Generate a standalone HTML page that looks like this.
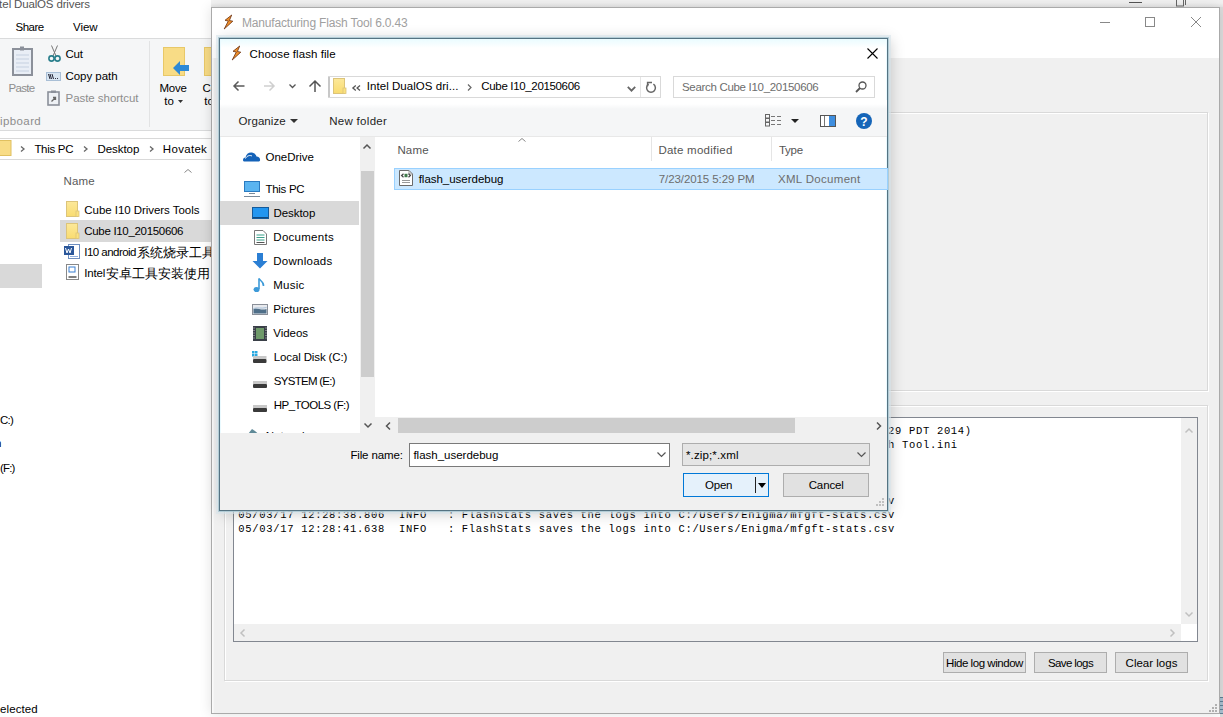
<!DOCTYPE html>
<html><head><meta charset="utf-8"><style>
html,body{margin:0;padding:0;}
body{width:1223px;height:717px;overflow:hidden;position:relative;background:#fff;font-family:'Liberation Sans', sans-serif;}
.b{position:absolute;box-sizing:border-box;}
.t{position:absolute;white-space:pre;}
svg{position:absolute;overflow:visible;}
</style></head><body>
<div class="b" style="left:0px;top:0px;width:1223px;height:717px;background:#ffffff;"></div>
<div class="t" style="left:-10.5px;top:-0.7px;font-size:11.5px;line-height:11.5px;color:#555;font-family:'Liberation Sans', sans-serif;">Intel</div>
<div class="t" style="left:14.0px;top:-0.7px;font-size:11.5px;line-height:11.5px;color:#555;font-family:'Liberation Sans', sans-serif;letter-spacing:-0.147px;">DualOS drivers</div>
<div class="t" style="left:15.6px;top:22.3px;font-size:11.5px;line-height:11.5px;color:#000;font-family:'Liberation Sans', sans-serif;letter-spacing:-0.520px;">Share</div>
<div class="t" style="left:73.0px;top:22.3px;font-size:11.5px;line-height:11.5px;color:#000;font-family:'Liberation Sans', sans-serif;letter-spacing:-0.035px;">View</div>
<div class="b" style="left:0px;top:38px;width:1223px;height:93px;background:#f5f6f7;"></div>
<div class="b" style="left:0px;top:38px;width:1223px;height:1px;background:#dadbdc;"></div>
<div class="b" style="left:0px;top:130px;width:1223px;height:1px;background:#dadbdc;"></div>
<div class="b" style="left:149px;top:41px;width:1px;height:86px;background:#e2e3e4;"></div>
<svg style="left:12px;top:46px;" width="21" height="31" viewBox="0 0 21 31"><rect x="1" y="3" width="19" height="26" fill="#e9eef6" stroke="#8b909a" stroke-width="2"/>
<rect x="8" y="0.5" width="4" height="4" fill="#8b909a"/>
<path d="M4 9h13M4 13h13M4 17h13M4 21h13M4 25h13" stroke="#c5d0e0" stroke-width="1"/></svg>
<div class="t" style="left:8.5px;top:82.8px;font-size:11.5px;line-height:11.5px;color:#8d8d8d;font-family:'Liberation Sans', sans-serif;letter-spacing:-0.706px;">Paste</div>
<svg style="left:48px;top:45px;" width="13" height="17" viewBox="0 0 13 17"><path d="M5 11L9.5 0.5M8 11L3.5 0.5" stroke="#777" stroke-width="1"/>
<circle cx="3.5" cy="13.5" r="2.6" fill="none" stroke="#2a7f8c" stroke-width="1.6"/>
<circle cx="9.5" cy="13.5" r="2.6" fill="none" stroke="#2a7f8c" stroke-width="1.6"/></svg>
<div class="t" style="left:65.5px;top:49.3px;font-size:11.5px;line-height:11.5px;color:#000;font-family:'Liberation Sans', sans-serif;letter-spacing:-0.248px;">Cut</div>
<svg style="left:46px;top:72px;" width="15" height="9" viewBox="0 0 15 9"><rect x="0.5" y="0.5" width="14" height="8" fill="#d9e6f2" stroke="#a9bfd6"/>
<path d="M2.5 2l1.5 5M4 2l1.5 5M6 2l1.5 5" stroke="#223" stroke-width="1"/><path d="M9 6.5h4" stroke="#334" stroke-width="1" stroke-dasharray="1 1"/></svg>
<div class="t" style="left:65.5px;top:71.3px;font-size:11.5px;line-height:11.5px;color:#000;font-family:'Liberation Sans', sans-serif;letter-spacing:-0.039px;">Copy path</div>
<svg style="left:47px;top:90px;" width="13" height="16" viewBox="0 0 13 16"><rect x="1" y="2" width="11" height="13" fill="#eef1f5" stroke="#8b909a" stroke-width="1.6"/>
<rect x="4" y="0.5" width="5" height="2.5" fill="#8b909a"/>
<path d="M4.5 11.5L8.5 7.5M6 7.5h2.5v2.5" stroke="#666" stroke-width="1.3" fill="none"/></svg>
<div class="t" style="left:65.5px;top:93.3px;font-size:11.5px;line-height:11.5px;color:#8d8d8d;font-family:'Liberation Sans', sans-serif;letter-spacing:-0.045px;">Paste shortcut</div>
<div class="t" style="left:-11.5px;top:115.7px;font-size:11.5px;line-height:11.5px;color:#8d8d8d;font-family:'Liberation Sans', sans-serif;letter-spacing:0.378px;">Clipboard</div>
<svg style="left:163px;top:47px;" width="27" height="29" viewBox="0 0 27 29"><rect x="0.5" y="0.5" width="21" height="28" fill="#f8dc86" stroke="#e8c868"/>
<path d="M10 21L17 14V18H26V24H17V28Z" fill="#2d89d6"/></svg>
<div class="t" style="left:159.6px;top:82.8px;font-size:11.5px;line-height:11.5px;color:#000;font-family:'Liberation Sans', sans-serif;letter-spacing:-0.300px;">Move</div>
<div class="t" style="left:164.3px;top:96.0px;font-size:11.5px;line-height:11.5px;color:#000;font-family:'Liberation Sans', sans-serif;">to</div>
<svg style="left:178px;top:100px;" width="5" height="3" viewBox="0 0 5 3"><path d="M0 0H5L2.5 3Z" fill="#333"/></svg>
<svg style="left:204px;top:47px;" width="10" height="29" viewBox="0 0 10 29"><rect x="0.5" y="0.5" width="20" height="28" fill="#f8dc86" stroke="#e8c868"/></svg>
<div class="t" style="left:202.4px;top:82.8px;font-size:11.5px;line-height:11.5px;color:#000;font-family:'Liberation Sans', sans-serif;">Copy</div>
<div class="t" style="left:204.2px;top:96.0px;font-size:11.5px;line-height:11.5px;color:#000;font-family:'Liberation Sans', sans-serif;">to</div>
<div class="b" style="left:-2px;top:138px;width:1225px;height:22px;background:#fff;border:1px solid #d9d9d9;"></div>
<svg style="left:0px;top:140px;" width="12" height="16" viewBox="0 0 12 16"><rect x="-5" y="0.5" width="16" height="15" fill="#f8dc86" stroke="#e0c060"/></svg>
<svg style="left:20px;top:146px;" width="5" height="6" viewBox="0 0 5 6"><path d="M1 0.5L4 3L1 5.5" stroke="#666" stroke-width="1.3" fill="none"/></svg>
<svg style="left:83px;top:146px;" width="5" height="6" viewBox="0 0 5 6"><path d="M1 0.5L4 3L1 5.5" stroke="#666" stroke-width="1.3" fill="none"/></svg>
<svg style="left:149px;top:146px;" width="5" height="6" viewBox="0 0 5 6"><path d="M1 0.5L4 3L1 5.5" stroke="#666" stroke-width="1.3" fill="none"/></svg>
<div class="t" style="left:34.4px;top:144.0px;font-size:11.5px;line-height:11.5px;color:#000;font-family:'Liberation Sans', sans-serif;letter-spacing:-0.296px;">This PC</div>
<div class="t" style="left:97.5px;top:144.0px;font-size:11.5px;line-height:11.5px;color:#000;font-family:'Liberation Sans', sans-serif;letter-spacing:-0.061px;">Desktop</div>
<div class="t" style="left:162.8px;top:144.0px;font-size:11.5px;line-height:11.5px;color:#000;font-family:'Liberation Sans', sans-serif;letter-spacing:0.314px;">Hovatek</div>
<div class="t" style="left:63.6px;top:175.8px;font-size:11.5px;line-height:11.5px;color:#5a5a5a;font-family:'Liberation Sans', sans-serif;letter-spacing:0.154px;">Name</div>
<svg style="left:184px;top:169px;" width="8" height="4" viewBox="0 0 8 4"><path d="M0.5 3.5L4 0.5L7.5 3.5" stroke="#888" stroke-width="1" fill="none"/></svg>
<div class="b" style="left:60px;top:220px;width:152px;height:22px;background:#d9d9d9;"></div>
<div class="b" style="left:0px;top:264px;width:42px;height:24px;background:#d9d9d9;"></div>
<svg style="left:66px;top:201px;" width="14" height="16" viewBox="0 0 14 16"><defs><linearGradient id="fg2" x1="0" y1="0" x2="0" y2="1"><stop offset="0" stop-color="#fce89a"/><stop offset="1" stop-color="#f9dc70"/></linearGradient></defs><rect x="0.5" y="0.5" width="11" height="15" fill="url(#fg2)" stroke="#dcc47a"/><rect x="10" y="10" width="3" height="5.5" fill="#fbe27e" stroke="#dcc47a" stroke-width="0.8"/></svg>
<svg style="left:66px;top:222.5px;" width="14" height="16" viewBox="0 0 14 16"><defs><linearGradient id="fg2" x1="0" y1="0" x2="0" y2="1"><stop offset="0" stop-color="#fce89a"/><stop offset="1" stop-color="#f9dc70"/></linearGradient></defs><rect x="0.5" y="0.5" width="11" height="15" fill="url(#fg2)" stroke="#dcc47a"/><rect x="10" y="10" width="3" height="5.5" fill="#fbe27e" stroke="#dcc47a" stroke-width="0.8"/></svg>
<svg style="left:64px;top:244px;" width="16" height="15" viewBox="0 0 16 15"><rect x="4.5" y="0.5" width="11" height="14" fill="#fff" stroke="#6f8fc0"/>
<rect x="0" y="2" width="10" height="9" fill="#2b579a"/><path d="M1.5 4l1.5 5 1.5-4 1.5 4 1.5-5" stroke="#fff" stroke-width="1" fill="none"/>
<path d="M6 12.5h8" stroke="#8fb0e0"/></svg>
<svg style="left:66px;top:264px;" width="13" height="16" viewBox="0 0 13 16"><rect x="0.5" y="0.5" width="12" height="15" fill="#fff" stroke="#888"/>
<rect x="3" y="3" width="6" height="5" fill="none" stroke="#3a7fd0"/><path d="M2.5 13h8" stroke="#555" stroke-width="1.5"/></svg>
<div class="t" style="left:84.3px;top:204.8px;font-size:11.5px;line-height:11.5px;color:#000;font-family:'Liberation Sans', sans-serif;letter-spacing:-0.048px;">Cube I10 Drivers Tools</div>
<div class="t" style="left:84.3px;top:226.0px;font-size:11.5px;line-height:11.5px;color:#000;font-family:'Liberation Sans', sans-serif;letter-spacing:-0.319px;">Cube I10_20150606</div>
<div class="t" style="left:84.3px;top:247.3px;font-size:11.5px;line-height:11.5px;color:#000;font-family:'Liberation Sans', sans-serif;letter-spacing:-0.533px;">I10 android</div>
<div class="t" style="left:136.5px;top:246.9px;font-size:12.5px;line-height:12.5px;color:#000;font-family:'Liberation Sans', sans-serif;">系统烧录工具</div>
<div class="t" style="left:84.3px;top:268.3px;font-size:11.5px;line-height:11.5px;color:#000;font-family:'Liberation Sans', sans-serif;letter-spacing:-0.167px;">Intel</div>
<div class="t" style="left:106.0px;top:267.9px;font-size:12.5px;line-height:12.5px;color:#000;font-family:'Liberation Sans', sans-serif;">安卓工具安装使用</div>
<div class="t" style="left:0.0px;top:414.7px;font-size:11.5px;line-height:11.5px;color:#000;font-family:'Liberation Sans', sans-serif;letter-spacing:-0.804px;">C:)</div>
<div class="t" style="left:-5.0px;top:438.3px;font-size:11.5px;line-height:11.5px;color:#000;font-family:'Liberation Sans', sans-serif;">n</div>
<div class="t" style="left:0.0px;top:462.7px;font-size:11.5px;line-height:11.5px;color:#000;font-family:'Liberation Sans', sans-serif;letter-spacing:-0.847px;">(F:)</div>
<div class="t" style="left:0.0px;top:704.3px;font-size:11.5px;line-height:11.5px;color:#000;font-family:'Liberation Sans', sans-serif;letter-spacing:0.112px;">elected</div>
<div class="b" style="left:1220px;top:0px;width:3px;height:717px;background:#dddddd;"></div>
<div class="b" style="left:1220px;top:697px;width:3px;height:17px;background:repeating-linear-gradient(#5f7f95 0 1.5px,#a8c0d0 1.5px 4px);"></div>
<div class="b" style="left:211px;top:0px;width:1012px;height:7px;background:linear-gradient(#f2f2f2 3px,#e6e6e6 7px);"></div>
<div class="b" style="left:1129px;top:2px;width:13px;height:1px;background:#555;"></div>
<svg style="left:1176px;top:-3px;" width="10" height="10" viewBox="0 0 10 10"><rect x="0.5" y="0.5" width="7" height="8.5" fill="none" stroke="#666"/><path d="M9.5 0v8" stroke="#666"/></svg>
<div class="b" style="left:211px;top:7px;width:1009px;height:707px;background:#f0f0f0;border:1px solid #aaaaaa;box-shadow:0 0 12px rgba(0,0,0,0.12), inset 1px 0 0 #fafafa, inset 2px 0 0 #f6f6f6;"></div>
<div class="b" style="left:212px;top:8px;width:1007px;height:50px;background:#ffffff;"></div>
<svg style="left:223px;top:14px;" width="11" height="16" viewBox="0 0 11 16"><path d="M8.7 1L2 6.3L5.3 7L1.2 15L9.8 7.2L6.4 6.5Z" fill="#f0902a" stroke="#6a3010" stroke-width="0.8" stroke-linejoin="round"/></svg>
<div class="t" style="left:241.9px;top:17.1px;font-size:12px;line-height:12px;color:#a0a0a0;font-family:'Liberation Sans', sans-serif;letter-spacing:-0.157px;">Manufacturing Flash Tool 6.0.43</div>
<div class="b" style="left:1100px;top:22px;width:10px;height:1px;background:#888;"></div>
<div class="b" style="left:1145px;top:17px;width:10px;height:10px;border:1px solid #888;"></div>
<svg style="left:1191px;top:17px;" width="10" height="10" viewBox="0 0 10 10"><path d="M0 0L10 10M10 0L0 10" stroke="#888" stroke-width="1"/></svg>
<div class="b" style="left:224px;top:112px;width:984px;height:279px;border:1px solid #d9d9d9;box-shadow:inset 1px 1px 0 #fff, 1px 1px 0 #fff;"></div>
<div class="b" style="left:224px;top:405px;width:984px;height:276px;border:1px solid #d9d9d9;box-shadow:inset 1px 1px 0 #fff, 1px 1px 0 #fff;"></div>
<div class="b" style="left:233px;top:417px;width:965px;height:225px;background:#ffffff;border:1px solid #828790;"></div>
<div class="b" style="left:1181px;top:418px;width:16px;height:206px;background:#f0f0f0;"></div>
<div class="b" style="left:234px;top:624px;width:947px;height:17px;background:#f0f0f0;"></div>
<svg style="left:1185px;top:428px;" width="8" height="5" viewBox="0 0 8 5"><path d="M0.5 4.5L4 1L7.5 4.5" stroke="#c0c0c0" stroke-width="1.5" fill="none"/></svg>
<svg style="left:1185px;top:612px;" width="8" height="5" viewBox="0 0 8 5"><path d="M0.5 0.5L4 4L7.5 0.5" stroke="#c0c0c0" stroke-width="1.5" fill="none"/></svg>
<svg style="left:240px;top:629px;" width="5" height="8" viewBox="0 0 5 8"><path d="M4.5 0.5L1 4L4.5 7.5" stroke="#c0c0c0" stroke-width="1.5" fill="none"/></svg>
<svg style="left:1170px;top:629px;" width="5" height="8" viewBox="0 0 5 8"><path d="M0.5 0.5L4 4L0.5 7.5" stroke="#c0c0c0" stroke-width="1.5" fill="none"/></svg>
<div class="t" style="left:238.3px;top:426.0px;font-size:10.5px;line-height:10.5px;color:#000;font-family:'Liberation Mono', monospace;letter-spacing:0.685px;">05/03/17 12:28:27.113  INFO   : Manufacturing Flash Tool v6.0.43 (built on: Thu Oct 23 10:22:29 PDT 2014)</div>
<div class="t" style="left:238.3px;top:440.0px;font-size:10.5px;line-height:10.5px;color:#000;font-family:'Liberation Mono', monospace;letter-spacing:0.685px;">05/03/17 12:28:27.114  INFO   : Loading settings : C:/Users/Enigma/AppData/Manufacturing Flash Tool.ini</div>
<div class="t" style="left:238.3px;top:454.0px;font-size:10.5px;line-height:10.5px;color:#000;font-family:'Liberation Mono', monospace;letter-spacing:0.685px;">05/03/17 12:28:27.120  INFO   : Loading plugins</div>
<div class="t" style="left:238.3px;top:468.0px;font-size:10.5px;line-height:10.5px;color:#000;font-family:'Liberation Mono', monospace;letter-spacing:0.685px;">05/03/17 12:28:27.522  INFO   : Plugins loaded</div>
<div class="t" style="left:238.3px;top:482.0px;font-size:10.5px;line-height:10.5px;color:#000;font-family:'Liberation Mono', monospace;letter-spacing:0.685px;">05/03/17 12:28:38.806  INFO   : Device manager initialized</div>
<div class="t" style="left:238.3px;top:496.0px;font-size:10.5px;line-height:10.5px;color:#000;font-family:'Liberation Mono', monospace;letter-spacing:0.685px;">05/03/17 12:28:38.806  INFO   : FlashStats saves the logs into C:/Users/Enigma/mfgft-stats.csv</div>
<div class="t" style="left:238.3px;top:510.0px;font-size:10.5px;line-height:10.5px;color:#000;font-family:'Liberation Mono', monospace;letter-spacing:0.685px;">05/03/17 12:28:38.806  INFO   : FlashStats saves the logs into C:/Users/Enigma/mfgft-stats.csv</div>
<div class="t" style="left:238.3px;top:524.0px;font-size:10.5px;line-height:10.5px;color:#000;font-family:'Liberation Mono', monospace;letter-spacing:0.685px;">05/03/17 12:28:41.638  INFO   : FlashStats saves the logs into C:/Users/Enigma/mfgft-stats.csv</div>
<div class="b" style="left:943px;top:652px;width:83px;height:21px;background:#e1e1e1;border:1px solid #adadad;"></div>
<div class="t" style="left:945.0px;top:658.1px;font-size:11.5px;line-height:11.5px;color:#000;font-family:'Liberation Sans', sans-serif;letter-spacing:-0.454px;width:79px;text-align:center;">Hide log window</div>
<div class="b" style="left:1034px;top:652px;width:73px;height:21px;background:#e1e1e1;border:1px solid #adadad;"></div>
<div class="t" style="left:1036.0px;top:658.1px;font-size:11.5px;line-height:11.5px;color:#000;font-family:'Liberation Sans', sans-serif;letter-spacing:-0.596px;width:69px;text-align:center;">Save logs</div>
<div class="b" style="left:1115px;top:652px;width:73px;height:21px;background:#e1e1e1;border:1px solid #adadad;"></div>
<div class="t" style="left:1117.0px;top:658.1px;font-size:11.5px;line-height:11.5px;color:#000;font-family:'Liberation Sans', sans-serif;width:69px;text-align:center;">Clear logs</div>
<svg style="left:1208px;top:703px;" width="10" height="10" viewBox="0 0 10 10"><g fill="#b0b0b0"><rect x="7" y="1" width="2" height="2"/><rect x="4" y="4" width="2" height="2"/><rect x="7" y="4" width="2" height="2"/><rect x="1" y="7" width="2" height="2"/><rect x="4" y="7" width="2" height="2"/><rect x="7" y="7" width="2" height="2"/></g></svg>
<div class="b" style="left:219px;top:38px;width:669px;height:473px;border:1px solid #557382;background:linear-gradient(#ecfcff 1px,#ffffff 9px);box-shadow:inset 1px 0 0 #eafaff, inset -1px 0 0 #eafaff, 0 0 0 1px rgba(170,200,210,0.85), 0 0 0 3px rgba(215,228,235,0.6), 2px 2px 14px rgba(0,0,0,0.22);"></div>
<svg style="left:231px;top:45px;" width="11" height="16" viewBox="0 0 11 16"><path d="M8.7 1L2 6.3L5.3 7L1.2 15L9.8 7.2L6.4 6.5Z" fill="#f0902a" stroke="#6a3010" stroke-width="0.8" stroke-linejoin="round"/></svg>
<div class="t" style="left:249.6px;top:49.3px;font-size:11.5px;line-height:11.5px;color:#000;font-family:'Liberation Sans', sans-serif;letter-spacing:0.060px;">Choose flash file</div>
<svg style="left:867px;top:48px;" width="11" height="11" viewBox="0 0 11 11"><path d="M0.5 0.5L10.5 10.5M10.5 0.5L0.5 10.5" stroke="#000" stroke-width="1.1"/></svg>
<svg style="left:233px;top:81px;" width="12" height="10" viewBox="0 0 12 10"><path d="M11.5 5H1M5.5 0.5L1 5L5.5 9.5" stroke="#5a5a5a" stroke-width="1.5" fill="none"/></svg>
<svg style="left:264px;top:81px;" width="11" height="10" viewBox="0 0 11 10"><path d="M0 5H10M5.5 0.5L10 5L5.5 9.5" stroke="#cfcfcf" stroke-width="1.5" fill="none"/></svg>
<svg style="left:289px;top:84px;" width="7" height="4" viewBox="0 0 7 4"><path d="M0.5 0.5L3.5 3.5L6.5 0.5" stroke="#555" stroke-width="1.3" fill="none"/></svg>
<svg style="left:309px;top:80px;" width="12" height="12" viewBox="0 0 12 12"><path d="M6 12V1M0.5 6.5L6 1L11.5 6.5" stroke="#555" stroke-width="1.5" fill="none"/></svg>
<div class="b" style="left:328px;top:76px;width:333px;height:22px;background:#fff;border:1px solid #d9d9d9;"></div>
<div class="b" style="left:328px;top:77px;width:2px;height:20px;background:#c8c8c8;"></div>
<div class="b" style="left:640px;top:77px;width:1px;height:20px;background:#e5e5e5;"></div>
<svg style="left:332px;top:78px;" width="15" height="16" viewBox="0 0 15 16"><defs><linearGradient id="fg" x1="0" y1="0" x2="0" y2="1"><stop offset="0" stop-color="#fce89a"/><stop offset="1" stop-color="#f9dc70"/></linearGradient></defs><rect x="1.5" y="0.5" width="11" height="15" fill="url(#fg)" stroke="#dcc47a"/><rect x="11" y="10" width="3" height="5.5" fill="#fbe27e" stroke="#dcc47a" stroke-width="0.8"/></svg>
<svg style="left:352px;top:84.5px;" width="9" height="6" viewBox="0 0 9 6"><path d="M3.8 0.6L0.9 3L3.8 5.4M8 0.6L5.1 3L8 5.4" stroke="#555" stroke-width="1.3" fill="none"/></svg>
<div class="t" style="left:366.8px;top:81.3px;font-size:11.5px;line-height:11.5px;color:#000;font-family:'Liberation Sans', sans-serif;letter-spacing:0.046px;">Intel DualOS dri...</div>
<svg style="left:467px;top:84px;" width="5" height="7" viewBox="0 0 5 7"><path d="M1 0.5L4 3.5L1 6.5" stroke="#666" stroke-width="1.2" fill="none"/></svg>
<div class="t" style="left:481.3px;top:81.3px;font-size:11.5px;line-height:11.5px;color:#000;font-family:'Liberation Sans', sans-serif;letter-spacing:-0.338px;">Cube I10_20150606</div>
<svg style="left:626.5px;top:85.5px;" width="9" height="6" viewBox="0 0 9 6"><path d="M0.8 0.8L4.5 4.6L8.2 0.8" stroke="#666" stroke-width="1.8" fill="none"/></svg>
<svg style="left:645px;top:81px;" width="12" height="12" viewBox="0 0 12 12"><path d="M8.4 3.2A4.4 4.4 0 1 1 3.6 3.2" stroke="#666" stroke-width="1.5" fill="none"/><path d="M7 1.6H2.6V5.2" stroke="#666" stroke-width="1.5" fill="none"/></svg>
<div class="b" style="left:673px;top:76px;width:202px;height:22px;background:#fff;border:1px solid #d9d9d9;"></div>
<div class="t" style="left:682.0px;top:82.3px;font-size:11.5px;line-height:11.5px;color:#6d6d6d;font-family:'Liberation Sans', sans-serif;letter-spacing:-0.311px;">Search Cube I10_20150606</div>
<svg style="left:855px;top:81px;" width="12" height="12" viewBox="0 0 12 12"><circle cx="7.5" cy="4.5" r="3.5" fill="none" stroke="#555" stroke-width="1.3"/><path d="M5 7L1 11" stroke="#555" stroke-width="1.8"/></svg>
<div class="b" style="left:220px;top:100px;width:667px;height:37px;background:linear-gradient(#ffffff 4px,#f5f6f7 9px);"></div>
<div class="b" style="left:220px;top:136px;width:667px;height:1px;background:#e8e8e8;"></div>
<div class="t" style="left:238.5px;top:116.1px;font-size:11.5px;line-height:11.5px;color:#1e1e1e;font-family:'Liberation Sans', sans-serif;letter-spacing:0.073px;">Organize</div>
<svg style="left:290px;top:119px;" width="8" height="4" viewBox="0 0 8 4"><path d="M0 0H8L4 4Z" fill="#333"/></svg>
<div class="t" style="left:329.2px;top:116.3px;font-size:11.5px;line-height:11.5px;color:#1e1e1e;font-family:'Liberation Sans', sans-serif;letter-spacing:0.301px;">New folder</div>
<svg style="left:765px;top:114px;" width="17" height="13" viewBox="0 0 17 13"><g fill="none" stroke="#666" stroke-width="1"><rect x="0.5" y="0.5" width="4" height="3.5"/><rect x="0.5" y="4.5" width="4" height="3.5"/><rect x="0.5" y="8.5" width="4" height="3.5"/></g>
<path d="M6 2.5h4M12 2.5h4M6 6.5h4M12 6.5h4M6 10.5h4M12 10.5h4" stroke="#777"/></svg>
<svg style="left:791px;top:119px;" width="8" height="4" viewBox="0 0 8 4"><path d="M0 0H8L4 4Z" fill="#222"/></svg>
<svg style="left:820px;top:115px;" width="16" height="12" viewBox="0 0 16 12"><rect x="0.5" y="0.5" width="15" height="11" fill="#fff" stroke="#555"/><rect x="9" y="1" width="6" height="10" fill="#3e8edf"/><path d="M4.5 1v10" stroke="#777"/></svg>
<svg style="left:856px;top:113px;" width="16" height="16" viewBox="0 0 16 16"><circle cx="8" cy="8" r="8" fill="#1565b8"/><text x="8" y="12.5" font-family="Liberation Sans" font-weight="bold" font-size="12" fill="#fff" text-anchor="middle">?</text></svg>
<div class="b" style="left:360px;top:137px;width:15px;height:296px;background:#f0f0f0;"></div>
<div class="b" style="left:361px;top:171px;width:13px;height:206px;background:#cdcdcd;"></div>
<svg style="left:363px;top:144px;" width="8" height="5" viewBox="0 0 8 5"><path d="M0.5 4.5L4 1L7.5 4.5" stroke="#555" stroke-width="1.5" fill="none"/></svg>
<svg style="left:364px;top:423px;" width="8" height="5" viewBox="0 0 8 5"><path d="M0.5 0.5L4 4L7.5 0.5" stroke="#555" stroke-width="1.5" fill="none"/></svg>
<div class="b" style="left:220px;top:201px;width:139px;height:24px;background:#d9d9d9;"></div>
<svg style="left:243px;top:151px;" width="18" height="11" viewBox="0 0 18 11"><path d="M1 10.5C-0.5 10.5 -0.5 6.5 2.5 6.5C3 3 6 1 9 1.5C11.5 2 13 3.5 13.5 5.5C16 5.5 17.5 7.5 17 9.5C16.8 10.2 16 10.5 15.5 10.5Z" fill="#1462b8"/><path d="M2.5 7.5C4 4.5 7 4 9 5" stroke="#fff" stroke-width="1" fill="none"/></svg>
<svg style="left:244px;top:181px;" width="17" height="16" viewBox="0 0 17 16"><rect x="0.5" y="0.5" width="15" height="10" fill="#5ab4f0" stroke="#2a7ac0"/><path d="M5 12.5h6M0 15.5h16" stroke="#7a8a9a" stroke-width="1"/></svg>
<svg style="left:252px;top:207px;" width="17" height="12" viewBox="0 0 17 12"><rect x="0.5" y="0.5" width="16" height="11" fill="#2396f0" stroke="#155a9a"/><path d="M1 10.5h15" stroke="#104a80"/></svg>
<svg style="left:254px;top:230px;" width="13" height="15" viewBox="0 0 13 15"><path d="M0.5 0.5H9L12.5 4V14.5H0.5Z" fill="#fff" stroke="#777"/><path d="M2.5 5h8M2.5 7.5h8M2.5 10h8" stroke="#3aa08a" stroke-width="1"/><path d="M2.5 12.5h8" stroke="#555"/></svg>
<svg style="left:252px;top:253px;" width="16" height="16" viewBox="0 0 16 16"><path d="M5 0H11V8H15.5L8 15.5L0.5 8H5Z" fill="#2b7fd4"/></svg>
<svg style="left:253px;top:278px;" width="12" height="15" viewBox="0 0 12 15"><path d="M6 0.5V11" stroke="#3d9ad8" stroke-width="1.6"/><ellipse cx="3.5" cy="11.5" rx="3" ry="2.6" fill="#3d9ad8"/><path d="M6 0.5C7 3 11 3.5 10.5 8" stroke="#3d9ad8" stroke-width="1.6" fill="none"/></svg>
<svg style="left:252px;top:304px;" width="16" height="11" viewBox="0 0 16 11"><rect x="0.5" y="0.5" width="15" height="10" fill="#e8eaee" stroke="#8a8f98"/><path d="M1.5 9.5V5C5 3 9 7 14.5 5V9.5Z" fill="#4f6f88"/><path d="M1.5 4.5C5 3 9 5 14.5 3.5" stroke="#a8c0d8" fill="none"/></svg>
<svg style="left:253px;top:326px;" width="14" height="15" viewBox="0 0 14 15"><rect x="0" y="0" width="14" height="15" fill="#3a3f48"/><rect x="3" y="2" width="8" height="11" fill="#6f9a6a"/><path d="M1 1.5v12M13 1.5v12" stroke="#ccc" stroke-dasharray="1 1.5"/></svg>
<svg style="left:252px;top:351px;" width="15" height="13" viewBox="0 0 15 13"><g fill="#29a8e0"><rect x="0" y="0" width="2.5" height="2.5"/><rect x="3" y="0" width="2.5" height="2.5"/><rect x="0" y="3" width="2.5" height="2.5"/><rect x="3" y="3" width="2.5" height="2.5"/></g><rect x="1" y="5" width="13.5" height="3" fill="#c8c8c8"/><rect x="1" y="8" width="13.5" height="4" rx="1" fill="#3a3a3a"/></svg>
<svg style="left:253px;top:380.5px;" width="14" height="7" viewBox="0 0 14 7"><rect x="0" y="0" width="14" height="3" fill="#c8c8c8"/><rect x="0" y="3" width="14" height="4" rx="1" fill="#3a3a3a"/></svg>
<svg style="left:253px;top:404.5px;" width="14" height="7" viewBox="0 0 14 7"><rect x="0" y="0" width="14" height="3" fill="#c8c8c8"/><rect x="0" y="3" width="14" height="4" rx="1" fill="#3a3a3a"/></svg>
<svg style="left:248px;top:428px;" width="11" height="6" viewBox="0 0 11 6"><path d="M0 6L4 1L7 3L10.5 6Z" fill="#5f8a98"/></svg>
<div class="t" style="left:265.5px;top:152.3px;font-size:11.5px;line-height:11.5px;color:#000;font-family:'Liberation Sans', sans-serif;letter-spacing:-0.010px;">OneDrive</div>
<div class="t" style="left:265.5px;top:184.0px;font-size:11.5px;line-height:11.5px;color:#000;font-family:'Liberation Sans', sans-serif;letter-spacing:-0.296px;">This PC</div>
<div class="t" style="left:273.5px;top:208.3px;font-size:11.5px;line-height:11.5px;color:#000;font-family:'Liberation Sans', sans-serif;letter-spacing:-0.061px;">Desktop</div>
<div class="t" style="left:273.3px;top:232.3px;font-size:11.5px;line-height:11.5px;color:#000;font-family:'Liberation Sans', sans-serif;letter-spacing:0.278px;">Documents</div>
<div class="t" style="left:273.3px;top:256.3px;font-size:11.5px;line-height:11.5px;color:#000;font-family:'Liberation Sans', sans-serif;letter-spacing:0.251px;">Downloads</div>
<div class="t" style="left:273.3px;top:280.3px;font-size:11.5px;line-height:11.5px;color:#000;font-family:'Liberation Sans', sans-serif;letter-spacing:0.220px;">Music</div>
<div class="t" style="left:273.3px;top:304.3px;font-size:11.5px;line-height:11.5px;color:#000;font-family:'Liberation Sans', sans-serif;letter-spacing:0.021px;">Pictures</div>
<div class="t" style="left:273.3px;top:328.3px;font-size:11.5px;line-height:11.5px;color:#000;font-family:'Liberation Sans', sans-serif;letter-spacing:-0.029px;">Videos</div>
<div class="t" style="left:273.8px;top:352.3px;font-size:11.5px;line-height:11.5px;color:#000;font-family:'Liberation Sans', sans-serif;letter-spacing:-0.132px;">Local Disk (C:)</div>
<div class="t" style="left:273.8px;top:376.3px;font-size:11.5px;line-height:11.5px;color:#000;font-family:'Liberation Sans', sans-serif;letter-spacing:-0.722px;">SYSTEM (E:)</div>
<div class="t" style="left:273.8px;top:400.3px;font-size:11.5px;line-height:11.5px;color:#000;font-family:'Liberation Sans', sans-serif;letter-spacing:-0.534px;">HP_TOOLS (F:)</div>
<div class="t" style="left:265.8px;top:431.3px;font-size:11.5px;line-height:11.5px;color:#000;font-family:'Liberation Sans', sans-serif;letter-spacing:-0.028px;">Network</div>
<div class="b" style="left:651px;top:137px;width:1px;height:24px;background:#e5e5e5;"></div>
<div class="b" style="left:771px;top:137px;width:1px;height:24px;background:#e5e5e5;"></div>
<svg style="left:518px;top:138px;" width="8" height="4" viewBox="0 0 8 4"><path d="M0.5 3.5L4 0.5L7.5 3.5" stroke="#888" stroke-width="1" fill="none"/></svg>
<div class="t" style="left:397.4px;top:144.9px;font-size:11.5px;line-height:11.5px;color:#555;font-family:'Liberation Sans', sans-serif;letter-spacing:0.154px;">Name</div>
<div class="t" style="left:658.4px;top:145.3px;font-size:11.5px;line-height:11.5px;color:#555;font-family:'Liberation Sans', sans-serif;letter-spacing:0.246px;">Date modified</div>
<div class="t" style="left:779.0px;top:145.3px;font-size:11.5px;line-height:11.5px;color:#555;font-family:'Liberation Sans', sans-serif;letter-spacing:-0.274px;">Type</div>
<div class="b" style="left:394px;top:168px;width:494px;height:22px;background:#cce8ff;border:1px solid #99d1ff;"></div>
<svg style="left:399px;top:170px;" width="14" height="16" viewBox="0 0 14 16"><path d="M0.5 0.5H10L13.5 4V15.5H0.5Z" fill="#fff" stroke="#6a6a6a"/><path d="M10 0.5V4H13.5" fill="none" stroke="#9a9a9a"/><path d="M4.5 3.8L2.6 5.5L4.5 7.2M9.5 3.8L11.4 5.5L9.5 7.2" stroke="#444" stroke-width="1.2" fill="none"/><rect x="5.5" y="3.8" width="3" height="3.4" fill="#3f7a4a"/><path d="M3 10.5h8M3 12.5h8" stroke="#999"/></svg>
<div class="t" style="left:418.7px;top:173.6px;font-size:11.5px;line-height:11.5px;color:#000;font-family:'Liberation Sans', sans-serif;letter-spacing:-0.023px;">flash_userdebug</div>
<div class="t" style="left:658.8px;top:174.1px;font-size:11.5px;line-height:11.5px;color:#6d6d6d;font-family:'Liberation Sans', sans-serif;letter-spacing:-0.090px;">7/23/2015 5:29 PM</div>
<div class="t" style="left:778.0px;top:174.1px;font-size:11.5px;line-height:11.5px;color:#6d6d6d;font-family:'Liberation Sans', sans-serif;letter-spacing:0.311px;">XML Document</div>
<div class="b" style="left:375px;top:417px;width:512px;height:16px;background:#f0f0f0;"></div>
<div class="b" style="left:398px;top:418px;width:397px;height:15px;background:#cdcdcd;"></div>
<svg style="left:385px;top:422px;" width="6" height="8" viewBox="0 0 6 8"><path d="M5 0.5L1.5 4L5 7.5" stroke="#555" stroke-width="1.5" fill="none"/></svg>
<svg style="left:876px;top:422px;" width="6" height="8" viewBox="0 0 6 8"><path d="M1 0.5L4.5 4L1 7.5" stroke="#555" stroke-width="1.5" fill="none"/></svg>
<div class="b" style="left:220px;top:433px;width:667px;height:77px;background:#f0f0f0;"></div>
<div class="t" style="left:350.4px;top:449.9px;font-size:11.5px;line-height:11.5px;color:#000;font-family:'Liberation Sans', sans-serif;letter-spacing:-0.137px;">File name:</div>
<div class="b" style="left:409px;top:443px;width:261px;height:24px;background:#fff;border:1px solid #7a7a7a;"></div>
<div class="t" style="left:413.4px;top:449.9px;font-size:11.5px;line-height:11.5px;color:#000;font-family:'Liberation Sans', sans-serif;letter-spacing:-0.003px;">flash_userdebug</div>
<svg style="left:657px;top:452px;" width="9" height="5" viewBox="0 0 9 5"><path d="M0.5 0.5L4.5 4.5L8.5 0.5" stroke="#555" stroke-width="1.2" fill="none"/></svg>
<div class="b" style="left:682px;top:443px;width:188px;height:23px;background:#e5e5e5;border:1px solid #adadad;"></div>
<div class="t" style="left:686.0px;top:449.9px;font-size:11.5px;line-height:11.5px;color:#000;font-family:'Liberation Sans', sans-serif;letter-spacing:0.133px;">*.zip;*.xml</div>
<svg style="left:857px;top:452px;" width="9" height="5" viewBox="0 0 9 5"><path d="M0.5 0.5L4.5 4.5L8.5 0.5" stroke="#555" stroke-width="1.2" fill="none"/></svg>
<div class="b" style="left:683px;top:473px;width:86px;height:24px;background:#e5f1fb;border:1px solid #0078d7;"></div>
<div class="t" style="left:705.0px;top:480.2px;font-size:11.5px;line-height:11.5px;color:#000;font-family:'Liberation Sans', sans-serif;letter-spacing:-0.215px;">Open</div>
<div class="b" style="left:755px;top:477px;width:1px;height:16px;background:#222;"></div>
<svg style="left:758px;top:483px;" width="8" height="5" viewBox="0 0 8 5"><path d="M0 0H8L4 5Z" fill="#000"/></svg>
<div class="b" style="left:783px;top:473px;width:86px;height:24px;background:#e1e1e1;border:1px solid #adadad;"></div>
<div class="t" style="left:808.7px;top:480.2px;font-size:11.5px;line-height:11.5px;color:#000;font-family:'Liberation Sans', sans-serif;letter-spacing:-0.129px;">Cancel</div>
<svg style="left:876px;top:498px;" width="9" height="9" viewBox="0 0 9 9"><g fill="#c0c0c0"><rect x="6" y="0" width="2" height="2"/><rect x="3" y="3" width="2" height="2"/><rect x="6" y="3" width="2" height="2"/><rect x="0" y="6" width="2" height="2"/><rect x="3" y="6" width="2" height="2"/><rect x="6" y="6" width="2" height="2"/></g></svg>
</body></html>
